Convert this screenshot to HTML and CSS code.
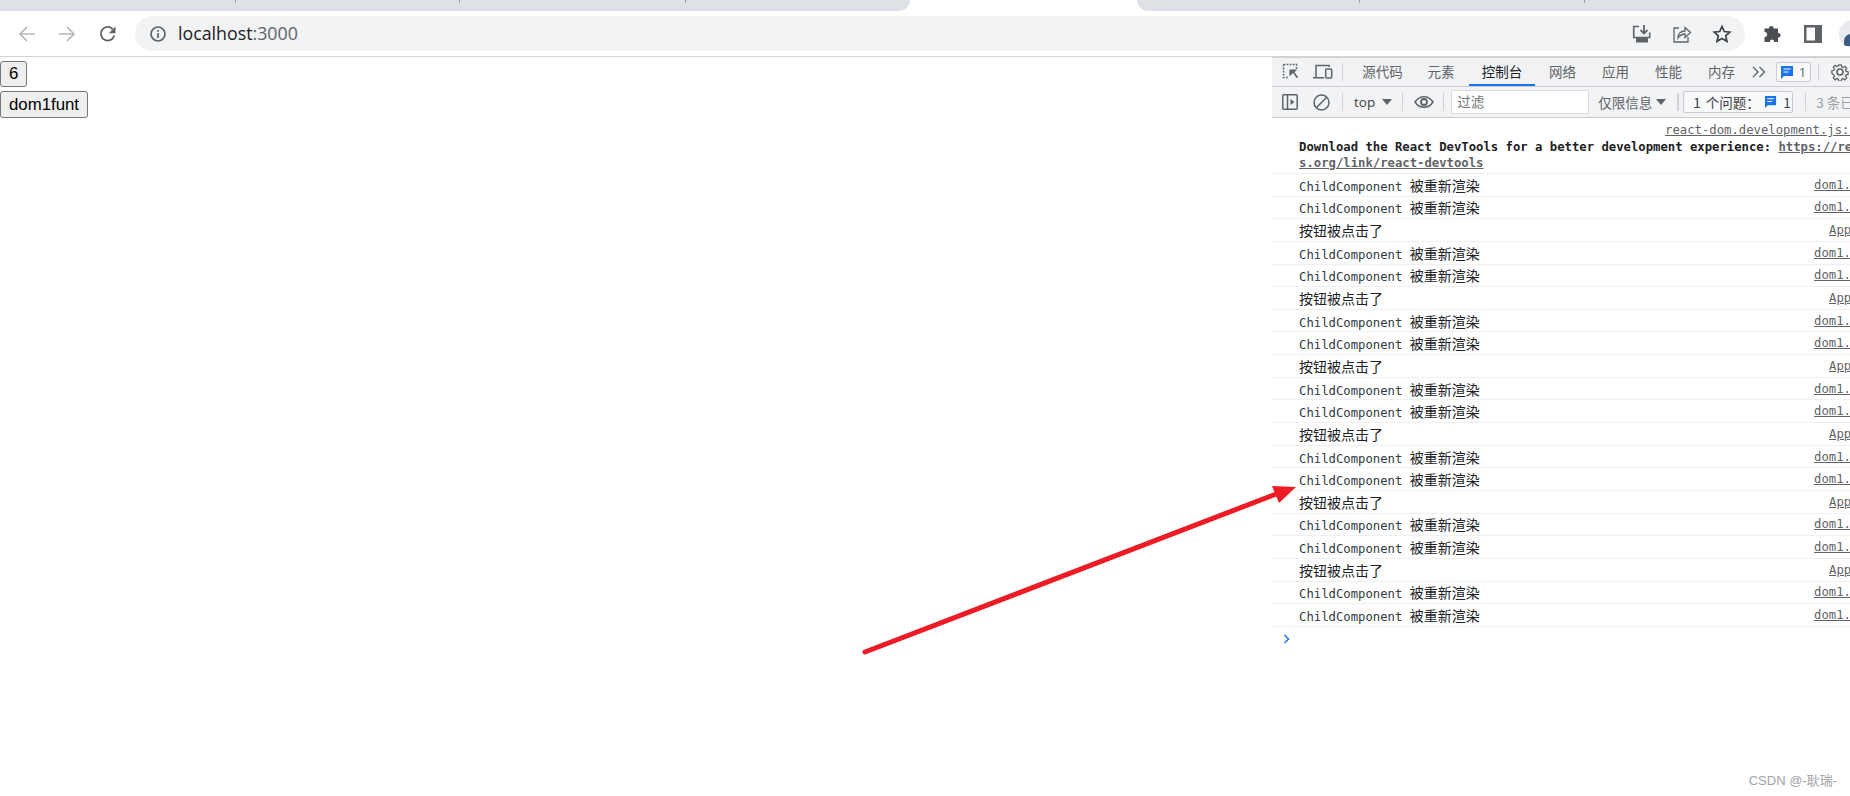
FILE: index.html
```html
<!DOCTYPE html>
<html lang="zh-CN">
<head>
<meta charset="utf-8">
<title>localhost:3000</title>
<link rel="stylesheet" href="styles.css">
</head>
<body>
<div class="tabstrip">
  <div class="tabgroup"><span class="tabcell w236"></span><span class="tabcell w224"></span><span class="tabcell w226"></span><span class="tabcell last"></span></div>
  <div class="activetab"></div>
  <div class="tabgroup right"><span class="tabcell w223"></span><span class="tabcell w225"></span><span class="tabcell last"></span></div>
</div>
<div class="toolbar">
  <svg class="ic" width="20" height="20" viewBox="0 0 20 20"><path d="M18 10H3M10 3l-7 7 7 7" fill="none" stroke="#b5b7ba" stroke-width="1.7"/></svg>
  <svg class="ic fwd" width="20" height="20" viewBox="0 0 20 20"><path d="M2 10h15M10 3l7 7-7 7" fill="none" stroke="#b5b7ba" stroke-width="1.7"/></svg>
  <svg class="ic reload" width="20" height="20" viewBox="0 0 20 20"><path d="M16.3 11.5A6.8 6.8 0 1 1 14.6 5" fill="none" stroke="#5f6368" stroke-width="1.8"/><path d="M17.5 2.5v6.7h-6.7z" fill="#5f6368"/></svg>
  <div class="omnibox">
    <svg width="18" height="18" viewBox="0 0 18 18"><circle cx="9" cy="9" r="7" fill="none" stroke="#5f6368" stroke-width="1.7"/><path d="M9 8v5M9 5v1.7" stroke="#5f6368" stroke-width="1.7"/></svg>
    <span class="url">localhost<span class="port">:3000</span></span>
    <span class="omni-icons">
      <svg width="20" height="20" viewBox="0 0 20 20"><path d="M7 2.500H1.700v11h16v-5" fill="none" stroke="#5f6368" stroke-width="1.600"/><path d="M4 14h12v4.500H4z" fill="#5f6368"/><path d="M12 1v8M8.500 6l3.500 3.500L15.500 6" fill="none" stroke="#5f6368" stroke-width="1.800"/></svg>
      <svg width="20" height="20" viewBox="0 0 20 20"><path d="M7 4H2v14h14v-5" fill="none" stroke="#5f6368" stroke-width="1.300"/><path d="M6 14c0-5 3-7 7-7V3.500l5.500 5-5.500 5V10c-3 0-5 1-7 4z" fill="none" stroke="#5f6368" stroke-width="1.300"/></svg>
      <svg width="20" height="20" viewBox="0 0 20 20"><path d="M10 2.500l2.300 5 5.500.6-4.100 3.700 1.200 5.400L10 14.400l-4.900 2.800 1.200-5.400-4.100-3.700 5.500-.6z" fill="none" stroke="#3c4043" stroke-width="1.700"/></svg>
    </span>
  </div>
  <svg class="ic puzzle" width="20" height="20" viewBox="0 0 20 20"><path d="M1.500 8V4.500H6c-.5-3.500 5-3.500 4.500 0H15V9c3.500-.5 3.500 5 0 4.500V18h-4c.5-3.500-4.500-3.500-4 0H1.500v-5c3.500.5 3.500-5.500 0-5z" fill="#4b4e52"/></svg>
  <svg class="ic panel" width="18" height="18" viewBox="0 0 18 18"><path d="M0 0h18v18H0zM2.500 2.500v13H11v-13z" fill="#5f6368" fill-rule="evenodd"/></svg>
  <span class="avatar"><span class="avatar-body"></span></span>
</div>
<main class="main">
  <section class="page">
    <button class="btn">6</button>
    <button class="btn">dom1funt</button>
  </section>
  <section class="devtools">
    <div class="dt-tabs">
      <svg class="dt-ic first" width="18" height="18" viewBox="0 0 18 18"><path d="M1.500 1.500h13v5M1.500 1.500v13h5" fill="none" stroke="#5f6368" stroke-width="1.500" stroke-dasharray="1.800 1.300"/><path d="M7 7h8.500l-3 3 4 5.500-1.500 1-4-5.500-4 3.500z" fill="#5f6368" transform="translate(1 0) scale(.92)"/></svg>
      <svg class="dt-ic second" width="20" height="18" viewBox="0 0 20 18"><path d="M3 14V2.500h13V4M0 14.700h11" fill="none" stroke="#5f6368" stroke-width="1.500"/><rect x="12.700" y="6" width="6" height="9" rx="1" fill="none" stroke="#5f6368" stroke-width="1.500"/></svg>
      <span class="vline tabs-line"></span>
      <span class="dt-tab t1">源代码</span>
      <span class="dt-tab t2">元素</span>
      <span class="dt-tab t3 active">控制台</span>
      <span class="dt-tab t4">网络</span>
      <span class="dt-tab t5">应用</span>
      <span class="dt-tab t6">性能</span>
      <span class="dt-tab t7">内存</span>
      <svg class="chev" width="14" height="12" viewBox="0 0 14 12"><path d="M1 1l5 5-5 5M7.500 1l5 5-5 5" fill="none" stroke="#5f6368" stroke-width="1.400"/></svg>
      <span class="badge"><svg width="13" height="13" viewBox="0 0 13 13"><path d="M0 0h12v10H3l-3 3z" fill="#1a73e8"/><path d="M2.500 3h7M2.500 6h5" stroke="#fff" stroke-width="1.200"/></svg><span>1</span></span>
      <span class="vline badge-line"></span>
      <svg class="gear" width="18" height="18" viewBox="0 0 18 18"><circle cx="9" cy="9" r="3" fill="none" stroke="#5f6368" stroke-width="1.600"/><path d="M7.500 1h3l.4 2.400 1.500.7 2-1.400 2.100 2.100-1.400 2 .7 1.500 2.200.4v3l-2.200.4-.7 1.500 1.400 2-2.100 2.100-2-1.400-1.500.7-.4 2.200h-3l-.4-2.200-1.500-.7-2 1.400-2.100-2.100 1.400-2-.7-1.500L0 10.500v-3l2.200-.4.700-1.500-1.400-2L3.600 1.500l2 1.400 1.500-.7z" fill="none" stroke="#5f6368" stroke-width="1.400" transform="translate(.9 .9) scale(.9)"/></svg>
    </div>
    <div class="dt-bar">
      <svg class="bar-ic sidebar" width="16" height="16" viewBox="0 0 16 16"><rect x=".8" y=".8" width="14.400" height="14.400" rx="1" fill="none" stroke="#5f6368" stroke-width="1.500"/><path d="M5.500 1v14" stroke="#5f6368" stroke-width="1.500"/><path d="M8.500 5l4 3-4 3z" fill="#5f6368"/></svg>
      <svg class="bar-ic clear" width="17" height="17" viewBox="0 0 17 17"><circle cx="8.500" cy="8.500" r="7.500" fill="none" stroke="#5f6368" stroke-width="1.500"/><path d="M3.300 13.700L13.700 3.300" stroke="#5f6368" stroke-width="1.500"/></svg>
      <span class="vline l1"></span>
      <span class="top-label">top</span>
      <span class="tri tri-top"></span>
      <span class="vline l2"></span>
      <svg class="bar-ic eye" width="20" height="14" viewBox="0 0 20 14"><path d="M1 7c4.500-7 13.500-7 18 0-4.500 7-13.500 7-18 0z" fill="none" stroke="#5f6368" stroke-width="1.500"/><circle cx="10" cy="7" r="3" fill="none" stroke="#5f6368" stroke-width="1.800"/></svg>
      <span class="vline l3"></span>
      <span class="filter">过滤</span>
      <span class="levels">仅限信息</span>
      <span class="tri tri-lv"></span>
      <span class="vline l4"></span>
      <span class="issues"><span class="issue-label">1 个问题：</span><svg width="12" height="12" viewBox="0 0 13 13"><path d="M0 0h12v10H3l-3 3z" fill="#1a73e8"/><path d="M2.500 3h7M2.500 6h5" stroke="#fff" stroke-width="1.200"/></svg><span>1</span></span>
      <span class="vline l5"></span>
      <span class="hidden-count">3 条已隐藏</span>
    </div>
    <div class="console">
      <div class="row first">
        <div class="src-first">react-dom.development.js:29840</div>
        <div class="dl">Download the React DevTools for a better development experience: <span class="link">https://reactj</span><br><span class="link">s.org/link/react-devtools</span></div>
      </div>
      <div class="row"><span>ChildComponent <span class="cjk">被重新渲染</span></span><span class="src dom">dom1.js:8</span></div>
      <div class="row"><span>ChildComponent <span class="cjk">被重新渲染</span></span><span class="src dom">dom1.js:8</span></div>
      <div class="row"><span class="cjk">按钮被点击了</span><span class="src app">App.js:12</span></div>
      <div class="row"><span>ChildComponent <span class="cjk">被重新渲染</span></span><span class="src dom">dom1.js:8</span></div>
      <div class="row"><span>ChildComponent <span class="cjk">被重新渲染</span></span><span class="src dom">dom1.js:8</span></div>
      <div class="row"><span class="cjk">按钮被点击了</span><span class="src app">App.js:12</span></div>
      <div class="row"><span>ChildComponent <span class="cjk">被重新渲染</span></span><span class="src dom">dom1.js:8</span></div>
      <div class="row"><span>ChildComponent <span class="cjk">被重新渲染</span></span><span class="src dom">dom1.js:8</span></div>
      <div class="row"><span class="cjk">按钮被点击了</span><span class="src app">App.js:12</span></div>
      <div class="row"><span>ChildComponent <span class="cjk">被重新渲染</span></span><span class="src dom">dom1.js:8</span></div>
      <div class="row"><span>ChildComponent <span class="cjk">被重新渲染</span></span><span class="src dom">dom1.js:8</span></div>
      <div class="row"><span class="cjk">按钮被点击了</span><span class="src app">App.js:12</span></div>
      <div class="row"><span>ChildComponent <span class="cjk">被重新渲染</span></span><span class="src dom">dom1.js:8</span></div>
      <div class="row"><span>ChildComponent <span class="cjk">被重新渲染</span></span><span class="src dom">dom1.js:8</span></div>
      <div class="row"><span class="cjk">按钮被点击了</span><span class="src app">App.js:12</span></div>
      <div class="row"><span>ChildComponent <span class="cjk">被重新渲染</span></span><span class="src dom">dom1.js:8</span></div>
      <div class="row"><span>ChildComponent <span class="cjk">被重新渲染</span></span><span class="src dom">dom1.js:8</span></div>
      <div class="row"><span class="cjk">按钮被点击了</span><span class="src app">App.js:12</span></div>
      <div class="row"><span>ChildComponent <span class="cjk">被重新渲染</span></span><span class="src dom">dom1.js:8</span></div>
      <div class="row"><span>ChildComponent <span class="cjk">被重新渲染</span></span><span class="src dom">dom1.js:8</span></div>
      <svg class="prompt" width="8" height="10" viewBox="0 0 8 10"><path d="M1.500 1l4 4-4 4" fill="none" stroke="#1a73e8" stroke-width="1.500"/></svg>
    </div>
  </section>
</main>
<svg class="arrow" width="1850" height="796" viewBox="0 0 1850 796"><path d="M865 652L1284 491" stroke="#ed1c24" stroke-width="5" stroke-linecap="round"/><path d="M1296 487L1272 486L1279 503z" fill="#ed1c24"/></svg>
<div class="watermark">CSDN @-耿瑞-</div>
</body>
</html>
```
FILE: styles.css
```css
* { box-sizing: border-box; }
html, body { margin: 0; padding: 0; }
body {
  width: 1850px;
  height: 796px;
  overflow: hidden;
  background: #fff;
  font-family: "Open Sans", "Noto Sans CJK SC", sans-serif;
  display: flex;
  flex-direction: column;
  position: relative;
}
.tabstrip { height: 16px; flex: none; display: flex; background: #fff; }
.tabgroup {
  width: 910px;
  height: 11px;
  background: #dee1e6;
  border-bottom-right-radius: 11px;
  display: flex;
}
.tabgroup.right {
  width: 713px;
  margin-left: auto;
  border-bottom-right-radius: 0;
  border-bottom-left-radius: 11px;
}
.activetab { width: 227px; }
.tabcell { height: 3px; border-right: 1px solid #9aa0a6; }
.tabcell.last { border: 0; }
.w236 { width: 236px; }
.w224 { width: 224px; }
.w226 { width: 226px; }
.w223 { width: 223px; }
.w225 { width: 225px; }

.toolbar {
  height: 41px;
  flex: none;
  display: flex;
  align-items: flex-start;
  padding-left: 17px;
  border-bottom: 1px solid #d4d5d7;
  position: relative;
}
.ic { flex: none; margin-top: 8px; }
.fwd { margin-left: 20px; }
.reload { margin-left: 21px; }
.omnibox {
  width: 1610px;
  height: 35px;
  margin-left: 17px;
  background: #f1f3f4;
  border-radius: 18px;
  display: flex;
  align-items: center;
  padding-left: 14px;
  flex: none;
}
.url { margin-left: 11px; margin-top: -2px; font-size: 17.800px; color: #202124; }
.port { color: #5f6368; }
.omni-icons { margin-left: auto; margin-right: 13px; display: flex; gap: 20px; }
.puzzle { margin-left: 18px; }
.panel { margin-left: 21px; margin-top: 9px; }
.avatar {
  width: 28px;
  height: 28px;
  margin-left: 17px;
  margin-top: 4px;
  border-radius: 50%;
  background: #e8eaed;
  flex: none;
  overflow: hidden;
  display: block;
}
.avatar-body { display: block; width: 14px; height: 12px; margin: 14px 0 0 5px; background: #3c5a86; border-radius: 7px 7px 0 0; }

.main { flex: 1; display: flex; min-height: 0; }
.page { width: 1272px; flex: none; padding-top: 4px; display: flex; flex-direction: column; align-items: flex-start; gap: 4px; }
.btn {
  font-family: "Liberation Sans", Arial, sans-serif;
  font-size: 16.800px;
  line-height: 20px;
  height: 26px;
  padding: 0 8px;
  background: #efefef;
  color: #000;
  border: 1px solid #767676;
  border-radius: 3px;
}
.btn + .btn { height: 27px; }
.devtools { flex: 1; min-width: 0; overflow: hidden; display: flex; flex-direction: column; }

.dt-tabs {
  height: 30px;
  flex: none;
  background: #f1f3f4;
  border-top: 1px solid #d0d1d3;
  border-bottom: 1px solid #cbcdd0;
  display: flex;
  align-items: center;
  font-family: "Noto Sans CJK SC", sans-serif;
  font-size: 13.500px;
  color: #5f6368;
  white-space: nowrap;
  position: relative;
}
.dt-ic.first { margin-left: 10px; }
.dt-ic.second { margin-left: 13px; }
.vline { display: block; width: 1px; height: 18px; background: #cfd1d4; flex: none; }
.tabs-line { margin-left: 9px; }
.dt-tab { flex: none; height: 28px; line-height: 27px; text-align: center; }
.t1 { margin-left: 18px; width: 43px; }
.t2 { margin-left: 22px; width: 30px; }
.t3 { margin-left: 13px; width: 66px; }
.t4 { margin-left: 13px; width: 29px; }
.t5 { margin-left: 24px; width: 29px; }
.t6 { margin-left: 24px; width: 29px; }
.t7 { margin-left: 24px; width: 29px; }
.dt-tab.active { color: #202124; border-bottom: 2px solid #1a73e8; }
.chev { margin-left: 16px; flex: none; }
.badge {
  margin-left: 10px;
  width: 35px;
  height: 20px;
  flex: none;
  background: #f8f9fa;
  border: 1px solid #c9cbce;
  border-radius: 2px;
  display: flex;
  align-items: center;
  justify-content: center;
  gap: 5px;
  font-family: "Open Sans", sans-serif;
  font-size: 13px;
}
.badge-line { margin-left: 7px; }
.gear { margin-left: 12px; flex: none; }

.dt-bar {
  height: 31px;
  flex: none;
  background: #f1f3f4;
  border-bottom: 1px solid #cbcdd0;
  display: flex;
  align-items: center;
  font-family: "Noto Sans CJK SC", sans-serif;
  font-size: 13.500px;
  color: #5f6368;
  white-space: nowrap;
}
.bar-ic { flex: none; }
.sidebar { margin-left: 10px; }
.clear { margin-left: 15px; }
.l1 { margin-left: 12px; }
.top-label { margin-left: 11px; font-family: "Open Sans", sans-serif; font-size: 13.500px; color: #3c4043; }
.tri { width: 0; height: 0; flex: none; border-left: 5px solid transparent; border-right: 5px solid transparent; border-top: 6px solid #5f6368; }
.tri-top { margin-left: 7px; }
.l2 { margin-left: 10px; }
.eye { margin-left: 11px; }
.l3 { margin-left: 9px; }
.filter {
  margin-left: 7px;
  width: 138px;
  height: 24px;
  flex: none;
  background: #fff;
  border: 1px solid #dadce0;
  line-height: 21px;
  padding-left: 5px;
  color: #70757a;
}
.levels { margin-left: 9px; font-size: 13.500px; }
.tri-lv { margin-left: 4px; }
.l4 { margin-left: 11px; width: 2px; }
.issues {
  margin-left: 4px;
  width: 110px;
  height: 22px;
  flex: none;
  background: #f8f9fa;
  border: 1px solid #c9cbce;
  border-radius: 2px;
  display: flex;
  align-items: center;
  padding-left: 9px;
  font-size: 13.500px;
  color: #3c4043;
}
.issue-label { width: 62px; word-spacing: 2px; flex: none; }
.issues svg { margin-left: 10px; margin-right: 6px; flex: none; }
.l5 { margin-left: 12px; }
.hidden-count { margin-left: 10px; color: #9aa0a6; font-size: 13.500px; }

.console {
  flex: 1;
  font-family: "DejaVu Sans Mono", monospace;
  font-size: 12.260px;
  color: #303942;
  overflow: hidden;
}
.row {
  height: 22.650px;
  padding-left: 27px;
  display: flex;
  align-items: center;
  justify-content: space-between;
  border-bottom: 1px solid #eff0f1;
  white-space: nowrap;
}
.row.first {
  height: 56px;
  display: block;
  padding-top: 4px;
  line-height: 16.500px;
}
.src-first { text-align: left; margin-left: 366px; color: #5f6368; text-decoration: underline; }
.dl { font-weight: 700; color: #202124; white-space: nowrap; }
.link { text-decoration: underline; color: #5f6368; }
.cjk { font-family: "Noto Sans CJK SC", sans-serif; font-size: 14px; color: #202124; }
.src { color: #5f6368; text-decoration: underline; overflow: hidden; flex: none; }
.dom { width: 36px; }
.app { width: 21px; }
.prompt { display: block; margin: 7px 0 0 11px; }

.arrow { position: absolute; left: 0; top: 0; pointer-events: none; }
.watermark {
  position: absolute;
  right: 13px;
  top: 770px;
  font-family: "Liberation Sans", "Noto Sans CJK SC", sans-serif;
  font-size: 13px;
  color: #a3a3a3;
}
```
